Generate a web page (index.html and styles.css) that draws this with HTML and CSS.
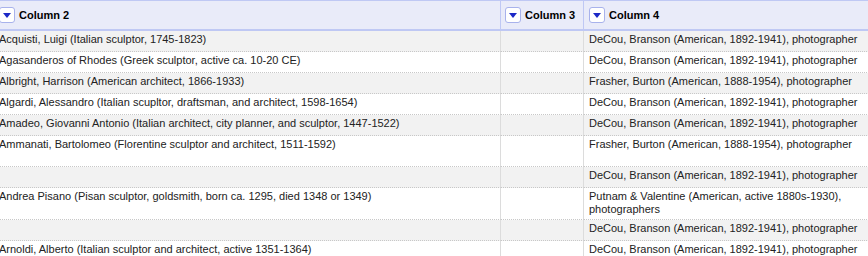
FILE: index.html
```html
<!DOCTYPE html>
<html>
<head>
<meta charset="utf-8">
<link rel="stylesheet" href="styles.css">
</head>
<body>
<div class="viewport">
<table class="data-table">
  <colgroup>
    <col class="c2"><col class="c3"><col class="c4">
  </colgroup>
  <thead>
    <tr>
      <th class="col2"><div class="head"><span class="dd"><svg width="8" height="5" viewBox="0 0 8 5"><polygon points="0,0 8,0 4,5" fill="#1c28c6"/></svg></span><span class="name">Column 2</span></div></th>
      <th class="col3"><div class="head"><span class="dd"><svg width="8" height="5" viewBox="0 0 8 5"><polygon points="0,0 8,0 4,5" fill="#1c28c6"/></svg></span><span class="name">Column 3</span></div></th>
      <th class="col4"><div class="head"><span class="dd"><svg width="8" height="5" viewBox="0 0 8 5"><polygon points="0,0 8,0 4,5" fill="#1c28c6"/></svg></span><span class="name">Column 4</span></div></th>
    </tr>
  </thead>
  <tbody>
    <tr class="odd"><td>Acquisti, Luigi (Italian sculptor, 1745-1823)</td><td></td><td>DeCou, Branson (American, 1892-1941), photographer</td></tr>
    <tr class="even"><td>Agasanderos of Rhodes (Greek sculptor, active ca. 10-20 CE)</td><td></td><td>DeCou, Branson (American, 1892-1941), photographer</td></tr>
    <tr class="odd"><td>Albright, Harrison (American architect, 1866-1933)</td><td></td><td>Frasher, Burton (American, 1888-1954), photographer</td></tr>
    <tr class="even"><td>Algardi, Alessandro (Italian scupltor, draftsman, and architect, 1598-1654)</td><td></td><td>DeCou, Branson (American, 1892-1941), photographer</td></tr>
    <tr class="odd"><td>Amadeo, Giovanni Antonio (Italian architect, city planner, and sculptor, 1447-1522)</td><td></td><td>DeCou, Branson (American, 1892-1941), photographer</td></tr>
    <tr class="even tall"><td>Ammanati, Bartolomeo (Florentine sculptor and architect, 1511-1592)</td><td></td><td>Frasher, Burton (American, 1888-1954), photographer</td></tr>
    <tr class="odd"><td></td><td></td><td>DeCou, Branson (American, 1892-1941), photographer</td></tr>
    <tr class="even taller"><td>Andrea Pisano (Pisan sculptor, goldsmith, born ca. 1295, died 1348 or 1349)</td><td></td><td>Putnam &amp; Valentine (American, active 1880s-1930), photographers</td></tr>
    <tr class="odd"><td></td><td></td><td>DeCou, Branson (American, 1892-1941), photographer</td></tr>
    <tr class="even"><td>Arnoldi, Alberto (Italian sculptor and architect, active 1351-1364)</td><td></td><td>DeCou, Branson (American, 1892-1941), photographer</td></tr>
  </tbody>
</table>
</div>
</body>
</html>
```

FILE: styles.css
```css
html, body {
  margin: 0;
  padding: 0;
  background: #fff;
  overflow: hidden;
}

.viewport {
  width: 868px;
  height: 256px;
  overflow: hidden;
}

.data-table {
  margin-left: -6px;
  table-layout: fixed;
  border-collapse: separate;
  border-spacing: 0;
  width: 885px;
  font-family: "Liberation Sans", Arial, sans-serif;
  font-size: 11px;
  line-height: 13px;
  color: #222;
}

.c2 { width: 507px; }
.c3 { width: 83px; }
.c4 { width: 295px; }

.data-table th {
  background: #e9ebf9;
  border-top: 1px solid #bfc8f4;
  border-bottom: 2px solid #bfc8f4;
  border-right: 1px solid #bfc8f4;
  height: 28px;
  padding: 0 5px;
  text-align: left;
  vertical-align: middle;
  box-sizing: border-box;
}

.data-table th.col3 { padding-left: 4px; }

.data-table thead tr th {
  height: 31px;
}

.head {
  display: flex;
  align-items: center;
  gap: 4px;
  white-space: nowrap;
}

.dd {
  width: 14px;
  height: 14px;
  background: #fff;
  border: 1px solid #a8b2ec;
  border-radius: 3px;
  display: flex;
  align-items: center;
  justify-content: center;
  flex: none;
}

.dd svg { display: block; margin-top: 1px; }

.name {
  font-weight: bold;
  font-size: 11px;
  color: #000;
}

.data-table td {
  padding: 2px 5px 0 5px;
  vertical-align: top;
  border-bottom: 1px dotted #c8c8c8;
  border-right: 1px solid #dcdcdc;
  height: 21px;
  box-sizing: border-box;
  overflow: hidden;
}

.data-table tr.odd td { background: #f2f2f2; }
.data-table tr.even td { background: #fff; }

.data-table tr.tall td { height: 31px; }
.data-table tr.taller td { height: 32px; }
```
